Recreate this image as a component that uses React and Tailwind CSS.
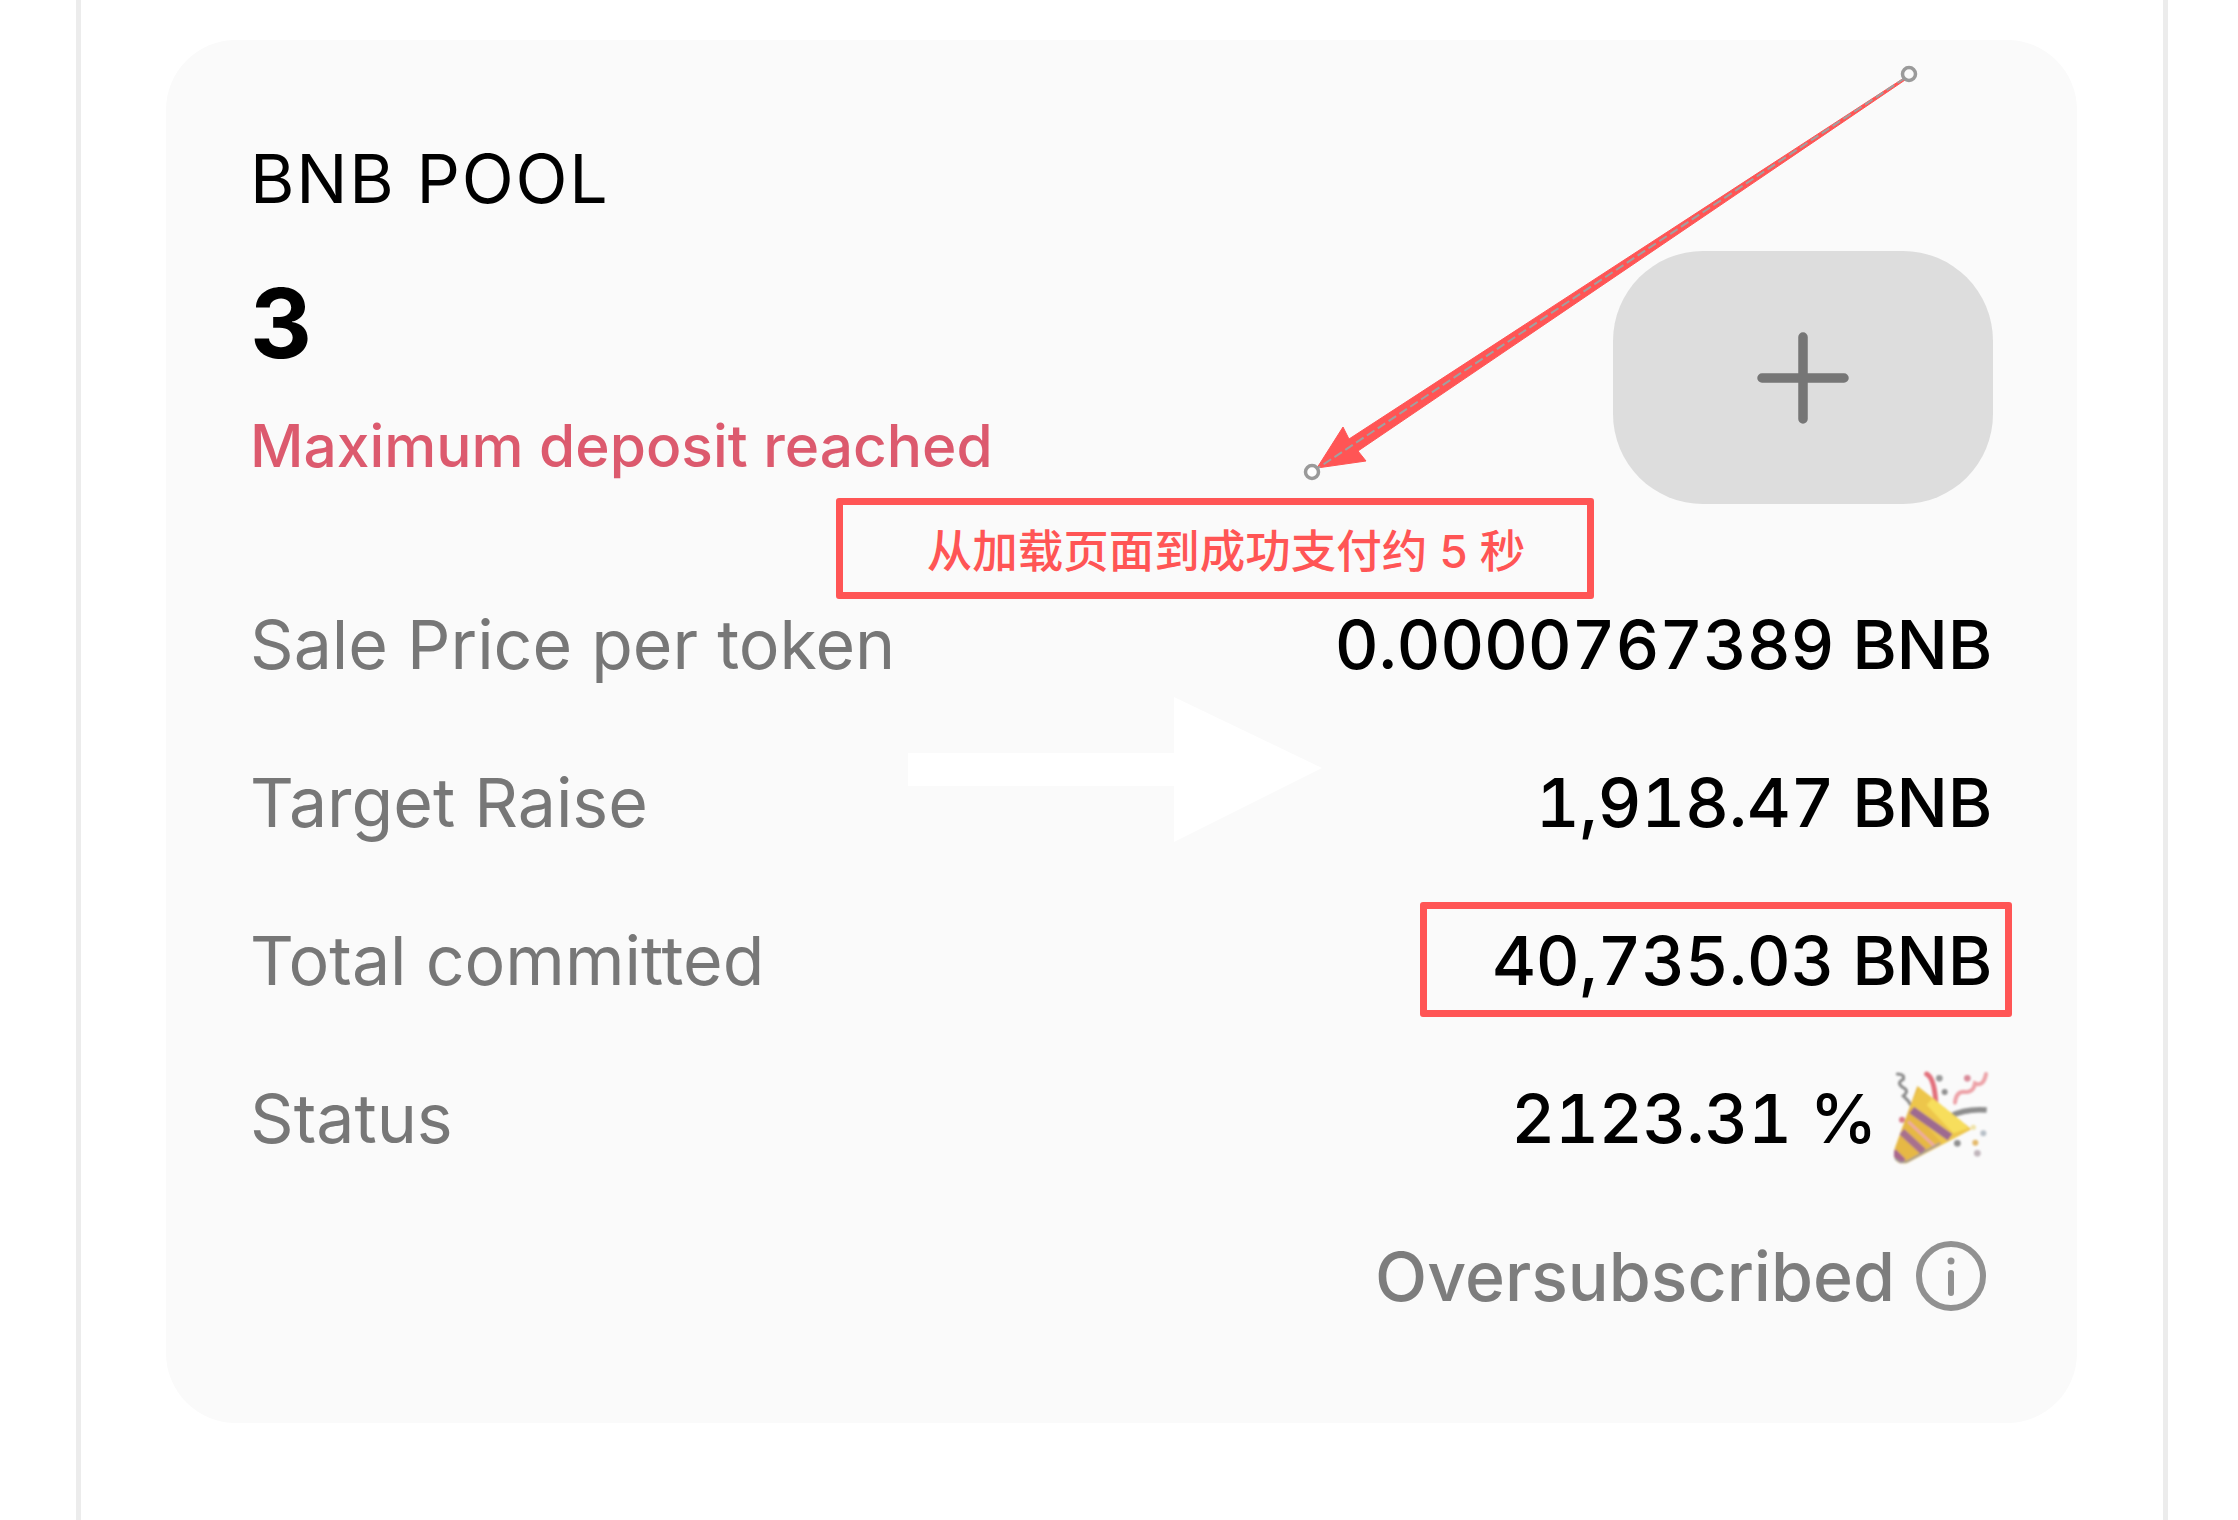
const font = "font-['Inter','Noto_Sans_CJK_SC',sans-serif]";

function PartyPopper() {
  return (
    <svg width="160" height="130" viewBox="0 0 480 390" className="absolute left-[1860px] top-[1050px]">
      <defs>
        <filter id="soft"><feGaussianBlur stdDeviation="2.4" /></filter>
        <clipPath id="cone"><path d="M172 108 L334 238 L140 340 Q110 345 102 320 Q100 305 106 290 Z" /></clipPath>
      </defs>
      <g filter="url(#soft)">
        <path d="M112 72 Q135 72 130 88 Q108 98 128 112 Q150 122 130 138 Q145 150 155 170" fill="none" stroke="#8b8b8b" strokeWidth="9" strokeLinecap="round" />
        <path d="M200 72 Q225 85 228 170" fill="none" stroke="#e2707c" strokeWidth="15" strokeLinecap="round" />
        <path d="M285 158 Q288 125 312 125 Q340 130 345 100 Q370 112 378 72" fill="none" stroke="#eda3a8" strokeWidth="12" strokeLinecap="round" />
        <circle cx="238" cy="85" r="10" fill="#9a9a9a" />
        <circle cx="254" cy="126" r="9" fill="#8f8f8f" />
        <circle cx="322" cy="85" r="10" fill="#d98a98" />
        <circle cx="126" cy="209" r="9" fill="#d77a8a" />
        <circle cx="292" cy="280" r="10" fill="#8f8f8f" />
        <circle cx="370" cy="250" r="9" fill="#b8c0c8" />
        <circle cx="346" cy="278" r="9" fill="#e4b96a" />
        <circle cx="352" cy="310" r="10" fill="#c0b5bb" />
        <circle cx="340" cy="232" r="8" fill="#f0e3a8" />
        <path d="M268 200 Q315 175 380 180" fill="none" stroke="#8e8e8e" strokeWidth="16" />
        <g clipPath="url(#cone)">
          <rect x="90" y="100" width="260" height="250" fill="#e6b845" />
          <path d="M178 110 L334 236 L250 285 L150 170 Z" fill="#edc64c" />
          <path d="M155 180 L270 262" stroke="#9e6a90" strokeWidth="24" />
          <path d="M125 245 L190 305" stroke="#a8718e" strokeWidth="22" />
          <path d="M100 305 L130 335" stroke="#a9688e" strokeWidth="20" />
          <path d="M145 215 L225 290" stroke="#f0a8ad" strokeWidth="7" />
          <path d="M230 130 L325 235 L280 250 L200 165 Z" fill="#f7de5c" />
        </g>
        <path d="M105 325 Q125 345 150 330 L240 280" fill="none" stroke="#9a9a9a" strokeWidth="5" />
      </g>
    </svg>
  );
}

function Annotations() {
  return (
    <>
      {/* faint white arrow */}
      <svg width="420" height="150" viewBox="0 0 420 150" className="absolute left-[905px] top-[696px]">
        <path d="M3 57 H269 V1 L417 72 L269 146 V90 H3 Z" fill="#ffffff" />
      </svg>
      {/* red callout arrow */}
      <svg width="2238" height="1520" viewBox="0 0 2238 1520" className="absolute left-0 top-0 pointer-events-none">
        <path d="M1907 76 L1349 439 L1343 427 L1317 468 L1366 461 L1358 451 L1908 78 Z" fill="#ff5555" stroke="#ff5555" strokeWidth="1" strokeLinejoin="round" />
        <line x1="1905" y1="78" x2="1318" y2="468" stroke="#a0a0a0" strokeWidth="2" strokeDasharray="9 4" />
        <circle cx="1909" cy="74" r="6.5" fill="#fafafa" stroke="#9a9a9a" strokeWidth="3.5" />
        <circle cx="1312" cy="472" r="6.5" fill="#ffffff" stroke="#9a9a9a" strokeWidth="3.5" />
      </svg>
      {/* red boxes */}
      <div className="absolute left-[836px] top-[498px] flex h-[101px] w-[758px] items-center justify-center rounded-[3px] border-[7px] border-[#ff5555] pl-[22px] pt-[6px]">
        <span className="text-[45.5px] font-medium leading-none text-[#ff5555]">从加载页面到成功支付约 5 秒</span>
      </div>
      <div className="absolute left-[1420px] top-[902px] h-[115px] w-[592px] rounded-[3px] border-[7px] border-[#ff5555]" />
    </>
  );
}

function Row({ label, children }) {
  return (
    <div className="flex h-[158px] items-center justify-between">
      <span className="text-[68px] leading-none text-[#777777]">{label}</span>
      {children}
    </div>
  );
}

const Value = ({ children }) => (
  <span className="text-[68px] font-medium tabular-nums leading-none tracking-[-0.3px] text-black">{children}</span>
);

export default function App() {
  return (
    <div className={`${font} relative h-[1520px] w-[2238px] overflow-hidden bg-white`}>
      <div className="ml-[76px] h-full w-[2092px] border-x-[5px] border-[#ececec] pl-[85px] pt-[40px]">
        <div className="h-[1383px] w-[1911px] rounded-[70px] bg-[#fafafa] pl-[84px] pr-[85px] pt-[106px]">
          <div className="flex items-start justify-between">
            <div className="flex flex-col">
              <div className="h-[64px] text-[68px] leading-[64px] tracking-[1.8px] text-black">BNB POOL</div>
              <div className="mt-[63px] h-[100px] text-[96px] font-bold leading-[100px] text-black">3</div>
              <div className="mt-[41px] h-[64px] text-[58.6px] font-medium leading-[64px] text-[#dc5a6e]">Maximum deposit reached</div>
            </div>
            <div className="mr-[-1px] mt-[105px] flex h-[253px] w-[380px] shrink-0 items-center justify-center rounded-[90px] bg-[#dddddd]">
              <svg width="92" height="92" viewBox="0 0 92 92" fill="none" stroke="#767676" strokeWidth="9.5" strokeLinecap="round">
                <path d="M46 5 V87 M5 46 H87" />
              </svg>
            </div>
          </div>
          <div className="mt-[61px] flex flex-col">
            <Row label="Sale Price per token"><Value>0.0000767389 BNB</Value></Row>
            <Row label="Target Raise"><Value>1,918.47 BNB</Value></Row>
            <Row label="Total committed"><Value>40,735.03 BNB</Value></Row>
            <Row label="Status">
              <span className="pr-[115px]"><Value>2123.31 %</Value></span>
            </Row>
            <div className="flex h-[158px] items-center justify-end gap-[20px]">
              <span className="text-[68px] font-medium leading-none text-[#7d7d7d]">Oversubscribed</span>
              <svg width="72" height="72" viewBox="0 0 72 72" fill="none" stroke="#919191" strokeWidth="6" className="mr-[5px]">
                <circle cx="36" cy="36" r="32" />
                <path d="M36 33 V53" strokeLinecap="round" />
                <circle cx="36" cy="21" r="3.5" fill="#919191" stroke="none" />
              </svg>
            </div>
          </div>
        </div>
      </div>
      <PartyPopper />
      <Annotations />
    </div>
  );
}
